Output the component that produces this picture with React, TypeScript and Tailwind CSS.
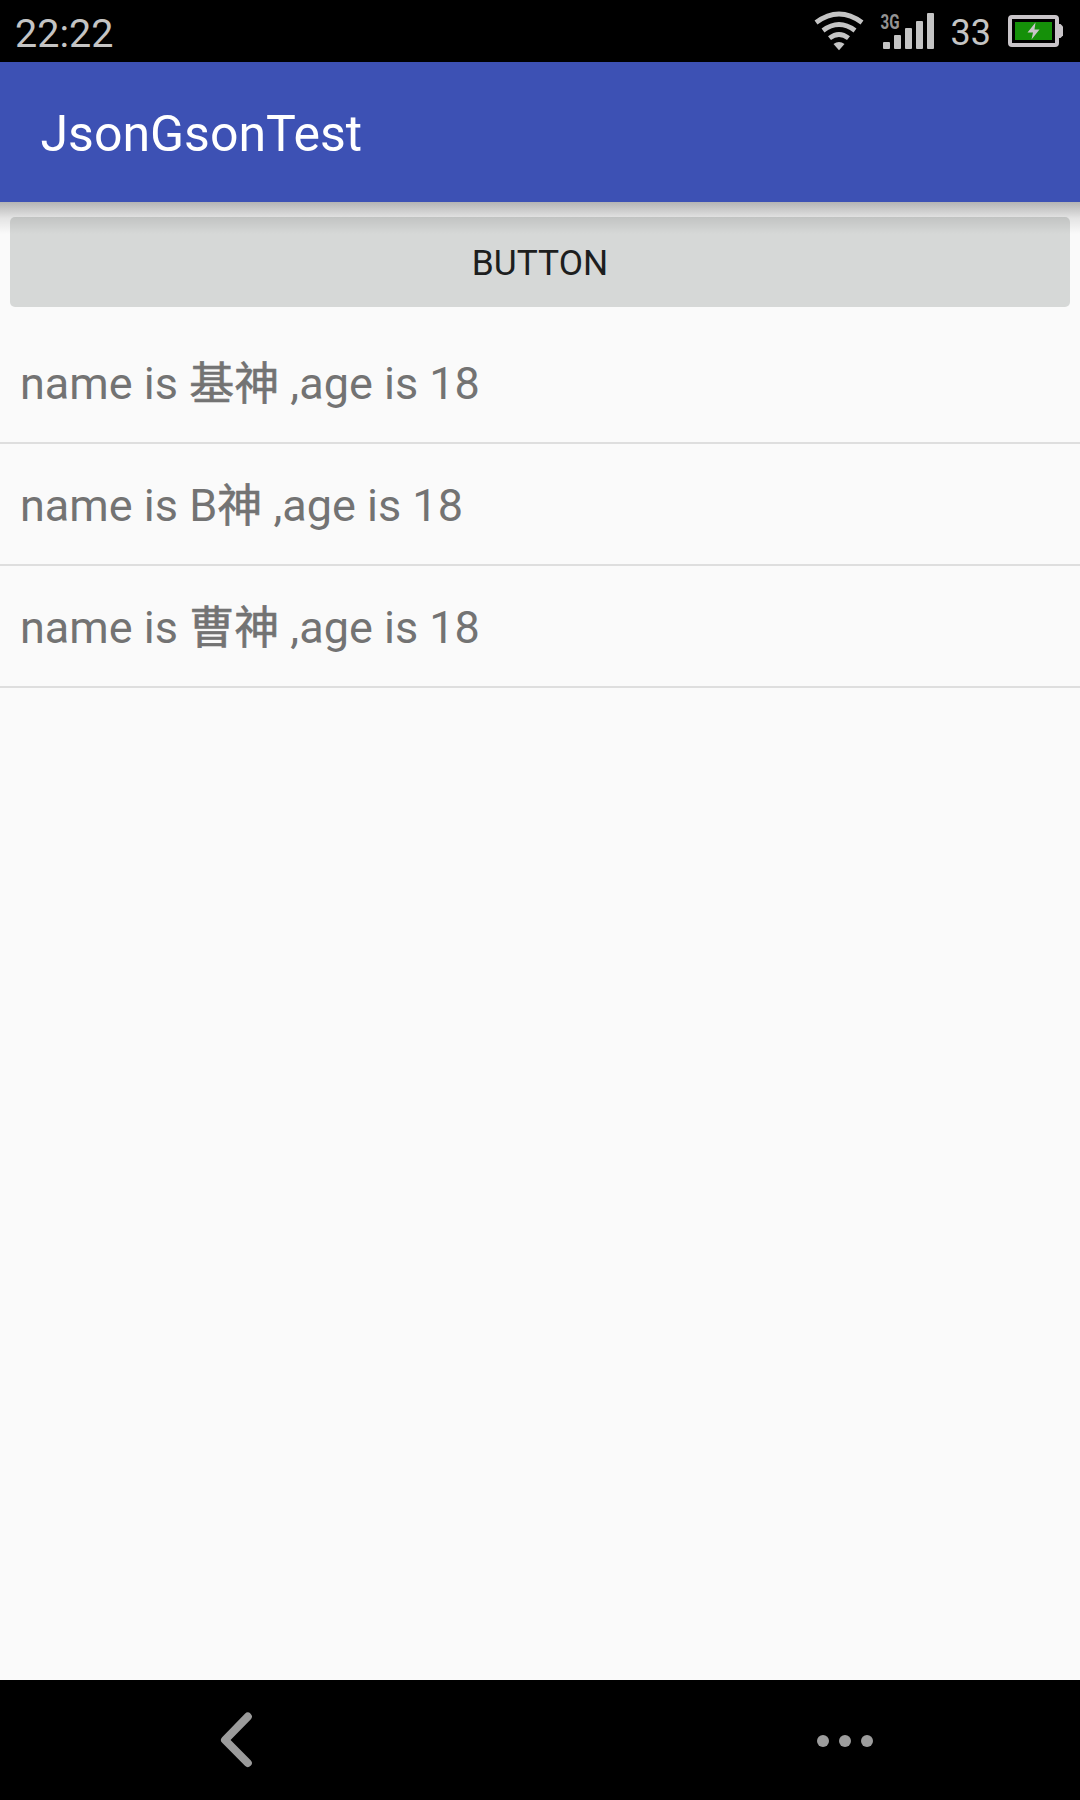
interface Person {
  name: string;
  age: number;
}

const people: Person[] = [
  { name: "基神", age: 18 },
  { name: "B神", age: 18 },
  { name: "曹神", age: 18 },
];

function WifiIcon() {
  return (
    <svg width="50" height="40" viewBox="0 0 50 40" className="shrink-0" fill="none" stroke="#c4c4c4" strokeWidth="4.8">
      <path d="M2 11.5Q25 -5.5 48 11.5" />
      <path d="M9 19.5Q25 7.5 41 19.5" />
      <path d="M15.5 27.2Q25 19.8 34.5 27.2" />
      <path d="M19.5 33Q25 29 30.5 33L25 39.2Z" fill="#c4c4c4" stroke="none" />
    </svg>
  );
}

function SignalIcon() {
  return (
    <svg width="56" height="46" viewBox="-2 -4 56 46" className="shrink-0">
      <text x="-0.5" y="17" fontSize="20.5" fontWeight="700" fill="#949494" textLength="19" lengthAdjust="spacingAndGlyphs">
        3G
      </text>
      <g fill="#c4c4c4">
        <rect x="2" y="30" width="7" height="7" rx="1" />
        <rect x="13" y="23" width="7" height="14" rx="1" />
        <rect x="24" y="16" width="7" height="21" rx="1" />
        <rect x="35" y="9" width="7" height="28" rx="1" />
        <rect x="46" y="1" width="7" height="36" rx="1" />
      </g>
    </svg>
  );
}

function BatteryIcon() {
  return (
    <svg width="56" height="32" viewBox="0 0 56 32" className="shrink-0">
      <rect x="2" y="2" width="47" height="28" rx="2" fill="none" stroke="#c9c5c9" strokeWidth="4" />
      <path d="M50 9H52.5L55 11.5V20.5L52.5 23H50Z" fill="#c9c5c9" />
      <rect x="7" y="7" width="37" height="18" fill="#159009" />
      <path d="M27.5 7.5L19.5 17.5H25L23.5 24.5L31.5 14.5H26.5Z" fill="#c9c5c9" />
    </svg>
  );
}

function StatusBar() {
  return (
    <div className="flex h-[62px] items-center justify-between bg-black pl-[15px] pr-4 text-[#c4c4c4]">
      <span className="pt-[5px] text-[39.5px] leading-none">22:22</span>
      <div className="flex items-center">
        <WifiIcon />
        <div className="ml-[15px] flex">
          <SignalIcon />
        </div>
        <span className="ml-[16px] pt-[4px] text-[36px] leading-none">33</span>
        <div className="ml-[17px]">
          <BatteryIcon />
        </div>
      </div>
    </div>
  );
}

// Han characters sit a touch lower and heavier than the Latin text around them
function PersonName({ name }: { name: string }) {
  return name.split(/([\u4e00-\u9fff]+)/).map((part, i) =>
    i % 2 === 1 ? (
      <span key={i} className="relative top-px [-webkit-text-stroke:0.6px_#737373]">
        {part}
      </span>
    ) : (
      part
    )
  );
}

function NavigationBar() {
  return (
    <div className="flex h-[120px] shrink-0 items-center justify-between bg-black pl-[220px] pr-[207px]">
      <svg width="34" height="56" viewBox="0 0 34 56" fill="none" stroke="#9b9b9b" strokeWidth="8" strokeLinecap="round" strokeLinejoin="round">
        <path d="M27.8 4.6L5 28L27.8 51" />
      </svg>
      <div className="flex gap-[10px] pt-[2px]">
        <span className="size-3 rounded-full bg-[#9d9d9d]" />
        <span className="size-3 rounded-full bg-[#9d9d9d]" />
        <span className="size-3 rounded-full bg-[#9d9d9d]" />
      </div>
    </div>
  );
}

export default function App() {
  return (
    <div className="flex h-[1800px] w-[1080px] flex-col bg-[#fafafa] font-[Roboto,'Noto_Sans_CJK_SC',sans-serif]">
      <StatusBar />
      <header className="flex h-[140px] items-center bg-[#3d51b4] pl-[40.5px]">
        <h1 className="pt-1 text-[50px] leading-none text-white">JsonGsonTest</h1>
      </header>

      <main className="relative flex-1">
        {/* toolbar elevation shadow, falls over the button too */}
        <div className="pointer-events-none absolute inset-x-0 top-0 h-[32px] bg-linear-to-b from-black/28 via-black/9 to-transparent" />
        <div className="px-[10px] py-[15px]">
          <button className="block h-[90px] w-full rounded-[5px] bg-[#d6d8d7] pt-1 text-[35.3px] leading-none text-[#1d1e1e]">
            BUTTON
          </button>
        </div>
        <ul>
          {people.map((person) => (
            <li key={person.name} className="flex h-[122px] items-center border-b-2 border-[#dedede] px-5 pt-[2px] text-[45px] text-[#737373]">
              <span className="leading-none whitespace-pre">
                {"name is "}
                <PersonName name={person.name} />
                {` ,age is ${person.age}`}
              </span>
            </li>
          ))}
        </ul>
      </main>

      <NavigationBar />
    </div>
  );
}
